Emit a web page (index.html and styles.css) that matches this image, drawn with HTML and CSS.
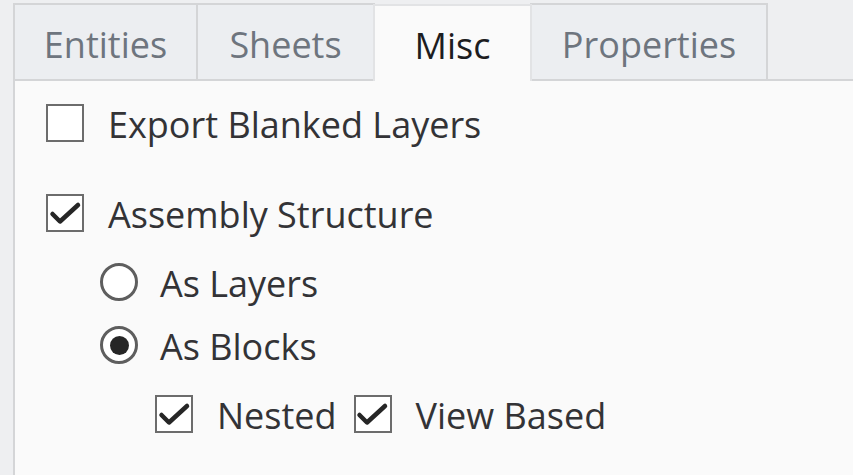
FILE: index.html
```html
<!DOCTYPE html>
<html>
<head>
<meta charset="utf-8">
<link rel="stylesheet" href="styles.css">
</head>
<body>
<div class="dialog">
  <div class="tabbar">
    <div class="tab tab-entities">Entities</div>
    <div class="tab tab-sheets">Sheets</div>
    <div class="tab tab-misc active">Misc</div>
    <div class="tab tab-properties">Properties</div>
  </div>
  <div class="panel">
    <label class="row row-export">
      <span class="check"></span>
      <span class="label">Export Blanked Layers</span>
    </label>
    <label class="row row-assembly">
      <span class="check checked"><svg viewBox="0 0 38 38" class="tick"><path d="M6.5 20 L14 27.5 L32 11" /></svg></span>
      <span class="label">Assembly Structure</span>
    </label>
    <label class="row row-radio row-layers">
      <span class="radio"></span>
      <span class="label">As Layers</span>
    </label>
    <label class="row row-radio row-blocks">
      <span class="radio selected"><span class="dot"></span></span>
      <span class="label">As Blocks</span>
    </label>
    <div class="row row-sub">
      <label class="inline">
        <span class="check checked"><svg viewBox="0 0 38 38" class="tick"><path d="M6.5 20 L14 27.5 L32 11" /></svg></span>
        <span class="label">Nested</span>
      </label>
      <label class="inline">
        <span class="check checked"><svg viewBox="0 0 38 38" class="tick"><path d="M6.5 20 L14 27.5 L32 11" /></svg></span>
        <span class="label">View Based</span>
      </label>
    </div>
  </div>
</div>
</body>
</html>
```
FILE: styles.css
```css
html, body {
  margin: 0;
  height: 100%;
}
body {
  background: #eeeff1;
  font-family: "Open Sans", "Noto Sans", sans-serif;
  overflow: hidden;
}
.dialog {
  margin-left: 13px;
  height: 100%;
  display: flex;
  flex-direction: column;
}
.tabbar {
  display: flex;
  align-items: flex-end;
  padding-top: 3px;
  border-bottom: 2px solid #d4d5d7;
  height: 76px;
}
.tab {
  box-sizing: border-box;
  height: 76px;
  border: 2px solid #d4d5d7;
  border-bottom: none;
  margin-left: -2px;
  background: #eceef1;
  color: #6e757e;
  font-size: 36px;
  line-height: 70px;
  padding-top: 5px;
  text-align: center;
}
.tab:first-child {
  margin-left: 0;
}
.tab-entities { width: 185px; }
.tab-sheets { width: 179px; }
.tab-misc { width: 159px; }
.tab-properties { width: 238px; }
.tab.active {
  background: #fafafa;
  color: #1d1d1f;
  margin-bottom: -2px;
  border-color: #e2e3e5;
  position: relative;
  z-index: 1;
  height: 77px;
}
.panel {
  flex: 1;
  background: #fafafa;
  border-left: 2px solid #d4d5d7;
  padding: 23px 0 0 31px;
  color: #333336;
  font-size: 36px;
}
.row, .inline {
  display: flex;
  align-items: center;
  height: 38px;
}
.row-assembly { margin-top: 52px; }
.row-radio { padding-left: 54px; }
.row-layers { margin-top: 31px; }
.row-blocks { margin-top: 25px; }
.row-sub {
  margin-top: 31px;
  padding-left: 109px;
}
.inline + .inline { margin-left: 17px; }
.label {
  margin-left: 24px;
  line-height: 38px;
  padding-top: 3px;
  white-space: nowrap;
}
.row-radio .label { margin-left: 22px; }
.check {
  box-sizing: border-box;
  width: 38px;
  height: 38px;
  flex: none;
  border: 2.5px solid #6c6c6c;
  background: #ffffff;
  position: relative;
}
.tick {
  position: absolute;
  left: -2.5px;
  top: -2.5px;
  width: 38px;
  height: 38px;
}
.tick path {
  fill: none;
  stroke: #262626;
  stroke-width: 4.5;
  stroke-linecap: round;
  stroke-linejoin: round;
}
.radio {
  box-sizing: border-box;
  width: 38px;
  height: 38px;
  flex: none;
  border: 3px solid #5e5e5e;
  border-radius: 50%;
  background: #ffffff;
  display: flex;
  align-items: center;
  justify-content: center;
}
.dot {
  width: 19px;
  height: 19px;
  border-radius: 50%;
  background: #262626;
}
```
